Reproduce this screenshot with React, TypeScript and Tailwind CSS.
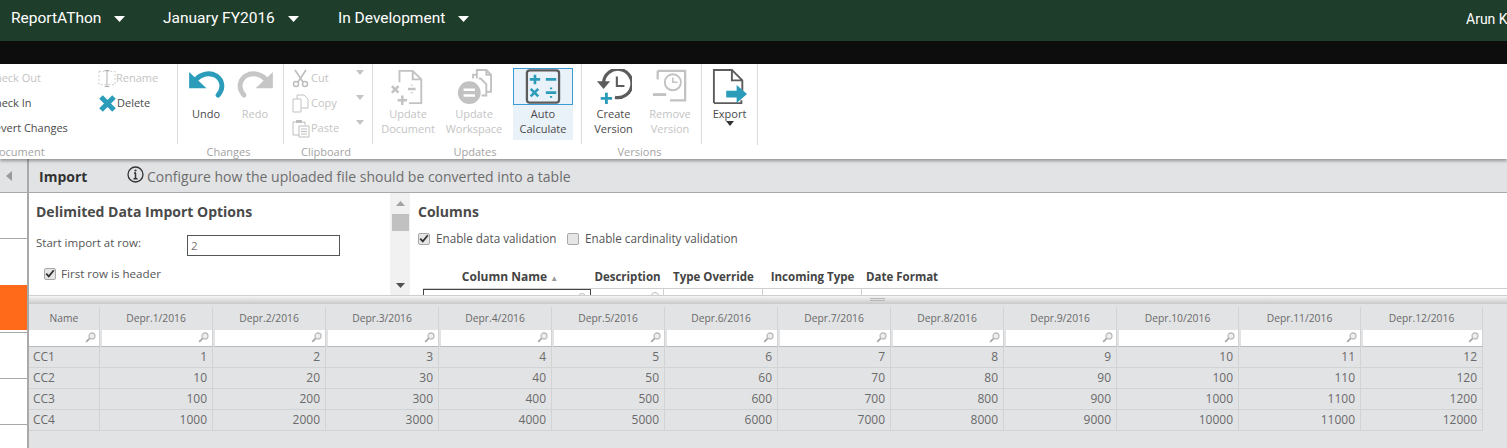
import React from 'react';

const months = Array.from({ length: 12 }, (_, i) => i + 1);
const rows = [
  { name: 'CC1', factor: 1 },
  { name: 'CC2', factor: 10 },
  { name: 'CC3', factor: 100 },
  { name: 'CC4', factor: 1000 },
];

const Caret = () => (
  <svg width="11" height="6" viewBox="0 0 11 6" className="shrink-0">
    <path d="M0 0h11L5.5 6z" fill="#fff" />
  </svg>
);

const NavItem = ({ label, width }: { label: string; width: string }) => (
  <div className={`flex items-center gap-[13px] ${width}`}>
    <span className="whitespace-nowrap">{label}</span>
    <Caret />
  </div>
);

const Group = ({ label, width, children, labelClass }: { label: string; width: string; children: React.ReactNode; labelClass?: string }) => (
  <div className={`flex flex-col shrink-0 ${width}`}>
    <div className="h-[81px] border-r border-[#dcdcdc] flex overflow-hidden">{children}</div>
    <div className={`text-[11px] leading-[14px] mt-[1px] text-[#a3a3a3] whitespace-nowrap ${labelClass ?? 'text-center pr-[5px]'}`}>{label}</div>
  </div>
);

const BigButton = ({
  lines,
  icon,
  disabled,
  width,
  active,
}: {
  lines: string[];
  icon: React.ReactNode;
  disabled?: boolean;
  width: string;
  active?: boolean;
}) => (
  <div className={`flex flex-col items-center shrink-0 ${width} ${active ? 'bg-[#eaf2f9] h-[72px] mt-[4px]' : 'pt-[4px]'}`}>
    <div className={`h-[37px] flex items-center justify-center ${active ? 'w-full border border-[#3c9bd6]' : ''}`}>{icon}</div>
    <div className={`text-[11px] leading-[15px] mt-[1px] text-center whitespace-nowrap ${disabled ? 'text-[#c4c4c4]' : 'text-[#4a4a4a]'}`}>
      {lines.map((l) => (
        <div key={l}>{l}</div>
      ))}
    </div>
  </div>
);

const SmallRow = ({ icon, label, disabled }: { icon?: React.ReactNode; label: string; disabled?: boolean }) => (
  <div className="h-[25px] flex items-center whitespace-nowrap">
    {icon}
    <span className={`text-[11px] ${disabled ? 'text-[#c4c4c4]' : 'text-[#4a4a4a]'}`}>{label}</span>
  </div>
);

const MiniCaret = () => (
  <svg width="8" height="5" viewBox="0 0 8 5">
    <path d="M0 0h8L4 5z" fill="#c4c4c4" />
  </svg>
);

const FilterIcon = () => (
  <svg width="11" height="11" viewBox="0 0 11 11" className="absolute right-[3px] top-[2px]">
    <circle cx="7" cy="4" r="3" fill="#eeeeee" stroke="#bdbdbd" strokeWidth="1.3" />
    <path d="M4.7 6.3 1.2 9.8" stroke="#a8a8a8" strokeWidth="1.8" />
  </svg>
);

const Check = ({ checked }: { checked?: boolean }) => (
  <span className="w-[12px] h-[12px] rounded-[2px] border border-[#a8a8a8] bg-[#e6e6e6] flex items-center justify-center shrink-0">
    {checked && (
      <svg width="10" height="9" viewBox="0 0 10 9">
        <path d="M1.2 4.6 3.8 7.4 8.8 1.2" fill="none" stroke="#333" strokeWidth="1.8" />
      </svg>
    )}
  </span>
);

const UndoIcon = ({ color, flip }: { color: string; flip?: boolean }) => (
  <svg width="37" height="29" viewBox="0 0 38 30" className={`${flip ? '-scale-x-100' : ''} -mt-[6px]`}>
    <path d="M8 11C13 5 22 3 29 7c7 5 8 13 2 20" fill="none" stroke={color} strokeWidth="5" strokeLinecap="round" />
    <path d="M1 3v17h18z" fill={color} />
  </svg>
);

const UpdateDocIcon = () => (
  <svg width="36" height="36" viewBox="0 0 38 38">
    <path d="M10 14V2h14l9 9v25H20M24 2v9h9" fill="none" stroke="#c2c2c2" strokeWidth="2" />
    <path d="M2 18l7 7M9 18l-7 7M19 21h8M23 16.500v1M23 24.500v1M8 33h10M13 28v10" stroke="#c2c2c2" strokeWidth="2.600" />
  </svg>
);

const UpdateWorkspaceIcon = () => (
  <svg width="36" height="36" viewBox="0 0 38 38">
    <path d="M18 10V6h4V1h10l5 5v18h-5M32 1v5h5M22 6v4M24 10h2l6 6v12h-5" fill="none" stroke="#c2c2c2" strokeWidth="2" />
    <circle cx="14" cy="25" r="12" fill="#c2c2c2" />
    <path d="M8 22h12M8 28h12" stroke="#fff" strokeWidth="2.600" />
  </svg>
);

const CalcIcon = () => (
  <svg width="36" height="35" viewBox="0 0 38 37">
    <rect x="2" y="1.500" width="34" height="34" rx="3" fill="none" stroke="#5c5c5c" strokeWidth="2.400" />
    <path d="M5 11h11M10.500 6v10M22 11h11M6 21l8 8M14 21l-8 8M22 25h11" stroke="#2c9cbb" strokeWidth="2.800" />
    <path d="M27.500 19.500v2M27.500 28.500v2" stroke="#2c9cbb" strokeWidth="2.400" />
  </svg>
);

const CreateVersionIcon = () => (
  <svg width="36" height="36" viewBox="0 0 38 38">
    <path d="M8 14A15 15 0 1 1 20 30" fill="none" stroke="#5c5c5c" strokeWidth="3.400" />
    <path d="M1 13h14l-7 8z" fill="#5c5c5c" />
    <path d="M22 8v10h8" fill="none" stroke="#5c5c5c" strokeWidth="2.200" />
    <path d="M5 31h12M11 25v12" stroke="#2c9cbb" strokeWidth="3" />
  </svg>
);

const RemoveVersionIcon = () => (
  <svg width="36" height="36" viewBox="0 0 38 38">
    <path d="M6 2h29v31H19" fill="none" stroke="#c2c2c2" strokeWidth="2.400" />
    <path d="M6 2v9" stroke="#c2c2c2" strokeWidth="2.400" />
    <circle cx="22" cy="14" r="8.500" fill="none" stroke="#c2c2c2" strokeWidth="2" />
    <path d="M22 9v5h5" fill="none" stroke="#c2c2c2" strokeWidth="1.600" />
    <path d="M1 27h14" stroke="#c2c2c2" strokeWidth="3" />
  </svg>
);

const ExportIcon = () => (
  <svg width="36" height="36" viewBox="0 0 38 38">
    <path d="M2 36V1h19l11 11v11M21 1v11h11M2 36h29v-3" fill="none" stroke="#5c5c5c" strokeWidth="2" />
    <path d="M15 23h11v-6l11 9.500-11 9.500v-6H15z" fill="#2c9cbb" />
  </svg>
);

const App: React.FC = () => {
  return (
    <div className="w-[1507px] h-[448px] overflow-hidden bg-white flex flex-col font-['Open_Sans',sans-serif] text-[#555]">
      {/* title bar */}
      <div className="h-[41px] shrink-0 bg-[#1f3d2b] flex items-center pl-[11px] pb-[3px] text-white text-[15.500px] font-['Roboto',sans-serif]">
        <NavItem label="ReportAThon" width="w-[152px]" />
        <NavItem label="January FY2016" width="w-[175px]" />
        <NavItem label="In Development" width="w-[150px]" />
        <div className="flex-1 min-w-0" />
        <div className="w-[41px] overflow-hidden whitespace-nowrap text-[14px]">Arun Kumar</div>
      </div>
      <div className="h-[23px] shrink-0 bg-[#0d0d0d]" />

      {/* ribbon */}
      <div className="h-[95px] shrink-0 bg-white flex relative z-10 shadow-[0_2px_3px_rgba(0,0,0,0.35)]">
        <Group label="Document" width="w-[178px] overflow-hidden" labelClass="-ml-[9px]">
          <div className="w-[97px] shrink-0 -ml-[4px] pt-[2px]">
            <div className="-ml-[8px]">
              <SmallRow label="Check Out" disabled />
              <SmallRow label="Check In" />
            </div>
            <div className="-ml-[8px]">
              <SmallRow label="Revert Changes" />
            </div>
          </div>
          <div className="pt-[2px] pl-[5px]">
            <SmallRow
              disabled
              label="Rename"
              icon={
                <svg width="18" height="19" viewBox="0 0 19 19">
                  <rect x="1" y="2" width="17" height="14" fill="none" stroke="#c8c8c8" strokeDasharray="2 2" />
                  <path d="M9.500 1v17M7 1h5M7 18h5" stroke="#aaa" />
                </svg>
              }
            />
            <SmallRow
              label="Delete"
              icon={
                <svg width="19" height="19" viewBox="0 0 19 19">
                  <path d="M3 3l13 13M16 3 3 16" stroke="#2c9cbb" strokeWidth="5" />
                </svg>
              }
            />
          </div>
        </Group>
        <Group label="Changes" width="w-[106px]">
          <BigButton width="w-[54px] ml-[1px]" lines={['Undo']} icon={<UndoIcon color="#2c9cbb" />} />
          <BigButton width="w-[44px]" disabled lines={['Redo']} icon={<UndoIcon color="#c6c6c6" flip />} />
        </Group>
        <Group label="Clipboard" width="w-[89px]">
          <div className="pl-[8px] pt-[2px] w-[68px] shrink-0">
            <SmallRow
              disabled
              label="Cut"
              icon={
                <svg width="18" height="19" viewBox="0 0 18 19" className="mr-[1px]">
                  <circle cx="4" cy="15" r="2.500" fill="none" stroke="#bdbdbd" strokeWidth="1.500" />
                  <circle cx="13" cy="15" r="2.500" fill="none" stroke="#bdbdbd" strokeWidth="1.500" />
                  <path d="M3 1l8 12M14 1 6 13" stroke="#bdbdbd" strokeWidth="1.600" />
                </svg>
              }
            />
            <SmallRow
              disabled
              label="Copy"
              icon={
                <svg width="18" height="19" viewBox="0 0 18 19" className="mr-[1px]">
                  <path d="M1 5h8v13H1zM5 5V1h7l4 4v9H9" fill="none" stroke="#c2c2c2" />
                </svg>
              }
            />
            <SmallRow
              disabled
              label="Paste"
              icon={
                <svg width="18" height="19" viewBox="0 0 18 19" className="mr-[1px]">
                  <path d="M1 3h12v3M1 3v13h6M7 7h10v11H7zM9 10h6M9 12.500h6M9 15h6" fill="none" stroke="#bdbdbd" />
                  <rect x="4" y="1" width="6" height="3" fill="#bdbdbd" />
                </svg>
              }
            />
          </div>
          <div className="flex flex-col pl-[4px] pt-[6px] gap-[20px]">
            <MiniCaret />
            <MiniCaret />
            <MiniCaret />
          </div>
        </Group>
        <Group label="Updates" width="w-[209px]">
          <BigButton width="w-[70px]" disabled lines={['Update', 'Document']} icon={<UpdateDocIcon />} />
          <BigButton width="w-[70px] pr-[8px]" disabled lines={['Update', 'Workspace']} icon={<UpdateWorkspaceIcon />} />
          <BigButton width="w-[60px]" active lines={['Auto', 'Calculate']} icon={<CalcIcon />} />
        </Group>
        <Group label="Versions" width="w-[120px]">
          <BigButton width="w-[63px]" lines={['Create', 'Version']} icon={<CreateVersionIcon />} />
          <BigButton width="w-[50px]" disabled lines={['Remove', 'Version']} icon={<RemoveVersionIcon />} />
        </Group>
        <Group label="" width="w-[56px]">
          <div className="w-full flex flex-col items-center">
            <BigButton width="w-full" lines={['Export']} icon={<ExportIcon />} />
            <svg width="8" height="5" viewBox="0 0 8 5">
              <path d="M0 0h8L4 5z" fill="#333" />
            </svg>
          </div>
        </Group>
      </div>

      {/* body */}
      <div className="flex-1 min-h-0 flex">
        {/* rail */}
        <div className="w-[29px] shrink-0 border-r-2 border-[#a9a9a9] flex flex-col bg-white">
          <div className="h-[34px] bg-[#e2e3e5] border-b border-[#a9a9a9] flex items-center justify-start pl-[6px] shrink-0">
            <svg width="6" height="10" viewBox="0 0 6 10">
              <path d="M6 0v10L0 5z" fill="#9a9a9a" />
            </svg>
          </div>
          <div className="h-[46px] border-b border-[#a9a9a9] shrink-0" />
          <div className="h-[46px] shrink-0" />
          <div className="h-[45px] bg-[#ff6a1a] shrink-0" />
          <div className="h-[3px] border-b border-[#a9a9a9] shrink-0" />
          <div className="h-[46px] border-b border-[#a9a9a9] shrink-0" />
          <div className="h-[46px] border-b border-[#a9a9a9] shrink-0" />
        </div>

        <div className="flex-1 min-w-0 flex flex-col">
          {/* import header */}
          <div className="h-[34px] shrink-0 bg-[#e2e3e5] border-b border-[#a9a9a9] flex items-center pl-[10px] pt-[1px]">
            <span className="text-[14px] font-bold text-[#333] w-[88px]">Import</span>
            <svg width="17" height="17" viewBox="0 0 17 17" className="mr-[3px] -mt-[3px]">
              <circle cx="8.500" cy="8.500" r="7.500" fill="none" stroke="#333" strokeWidth="1.300" />
              <path d="M8.500 7v5.500M6.500 12.700h4M7 7h2" stroke="#333" strokeWidth="1.500" />
              <circle cx="8.500" cy="4.500" r="1.100" fill="#333" />
            </svg>
            <span className="text-[14px] text-[#6d6d6d] whitespace-nowrap">Configure how the uploaded file should be converted into a table</span>
          </div>

          {/* option panes */}
          <div className="h-[102px] shrink-0 flex overflow-hidden bg-white">
            <div className="w-[361px] shrink-0 pl-[7px]">
              <div className="text-[14px] font-bold text-[#4a4a4a] mt-[9px] leading-[20px]">Delimited Data Import Options</div>
              <div className="flex items-center mt-[13px] h-[21px]">
                <span className="text-[11.500px] text-[#555] w-[151px] -mt-[5px]">Start import at row:</span>
                <div className="w-[153px] h-[21px] border border-[#555] text-[11.500px] text-[#777] pl-[3px] flex items-center">2</div>
              </div>
              <div className="flex items-center gap-[5px] ml-[8px] mt-[9px]">
                <Check checked />
                <span className="text-[11.600px] text-[#555]">First row is header</span>
              </div>
            </div>
            <div className="w-[20px] shrink-0 bg-[#f1f1f1] flex flex-col items-center pt-[8px]">
              <svg width="9" height="5" viewBox="0 0 9 5">
                <path d="M0 5h9L4.500 0z" fill="#a3a3a3" />
              </svg>
              <div className="w-[17px] h-[17px] bg-[#c1c1c1] mt-[8px]" />
              <div className="flex-1" />
              <svg width="9" height="5" viewBox="0 0 9 5" className="mb-[7px]">
                <path d="M0 0h9L4.500 5z" fill="#505050" />
              </svg>
            </div>
            <div className="flex-1 min-w-0 pl-[8px]">
              <div className="text-[14px] font-bold text-[#4a4a4a] mt-[9px] leading-[20px]">Columns</div>
              <div className="flex items-center mt-[8px] text-[11.700px] text-[#555]">
                <Check checked />
                <span className="ml-[6px] w-[131px]">Enable data validation</span>
                <Check />
                <span className="ml-[6px]">Enable cardinality validation</span>
              </div>
              <div className="flex ml-[5px] mt-[19px] text-[11.500px] font-bold text-[#444] h-[22px] items-center border-b border-[#cfcfcf]">
                <div className="w-[168px] text-center pl-[6px] text-[12px]">Column Name <span className="text-[8px] text-[#999]">▲</span></div>
                <div className="w-[73px] text-center">Description</div>
                <div className="w-[99px] text-center">Type Override</div>
                <div className="w-[99px] text-center">Incoming Type</div>
                <div className="pl-[4px]">Date Format</div>
              </div>
              <div className="flex ml-[5px] h-[8px]">
                <div className="w-[168px] border border-[#444] border-b-0 relative">
                  <span className="absolute right-[4px] top-[3px] w-[8px] h-[8px] rounded-full border border-[#b5bcc4]" />
                </div>
                <div className="w-[73px] border-r border-[#cfcfcf] relative">
                  <span className="absolute right-[4px] top-[3px] w-[8px] h-[8px] rounded-full border border-[#b5bcc4]" />
                </div>
                <div className="w-[99px] border-r border-[#cfcfcf]" />
                <div className="w-[99px] border-r border-[#cfcfcf]" />
              </div>
            </div>
          </div>

          {/* splitter */}
          <div className="h-[9px] shrink-0 border-t border-[#cfcfcf] bg-gradient-to-b from-[#f5f5f5] to-[#c9c9c9] flex items-start justify-center pl-[218px] pt-[2px]">
            <div className="w-[15px] h-[3px] border-y border-[#b5b5b5]" />
          </div>

          {/* data grid */}
          <div className="flex-1 min-h-0 bg-[#e2e3e5] pt-[3px]">
            <div className="grid grid-cols-[71px_repeat(9,113px)_repeat(3,122px)] w-[1454px] text-[10.300px] text-[#6a6a6a]">
              <div className="h-[23px] pt-[1px] flex items-center justify-center border-r border-[#d2d3d5]">Name</div>
              {months.map((m) => (
                <div key={m} className="h-[23px] pt-[1px] flex items-center justify-center border-r border-[#d2d3d5]">
                  Depr.{m}/2016
                </div>
              ))}
              <div className="h-[17px] relative bg-white border-b border-b-[#b9b9b9] border-r border-r-[#d2d3d5]">
                <FilterIcon />
              </div>
              {months.map((m) => (
                <div key={m} className="h-[17px] relative border-l-2 border-l-[#e2e3e5] bg-white border-b border-b-[#b9b9b9] border-r border-r-[#d2d3d5]">
                  <FilterIcon />
                </div>
              ))}
              {rows.map((r) => (
                <React.Fragment key={r.name}>
                  <div className="h-[21px] flex items-center pl-[4px] text-[12px] border-r border-b border-[#d2d3d5]">{r.name}</div>
                  {months.map((m) => (
                    <div key={m} className="h-[21px] flex items-center justify-end pr-[5px] text-[12px] border-r border-b border-[#d2d3d5]">
                      {m * r.factor}
                    </div>
                  ))}
                </React.Fragment>
              ))}
            </div>
          </div>
        </div>
      </div>
    </div>
  );
};

export default App;
